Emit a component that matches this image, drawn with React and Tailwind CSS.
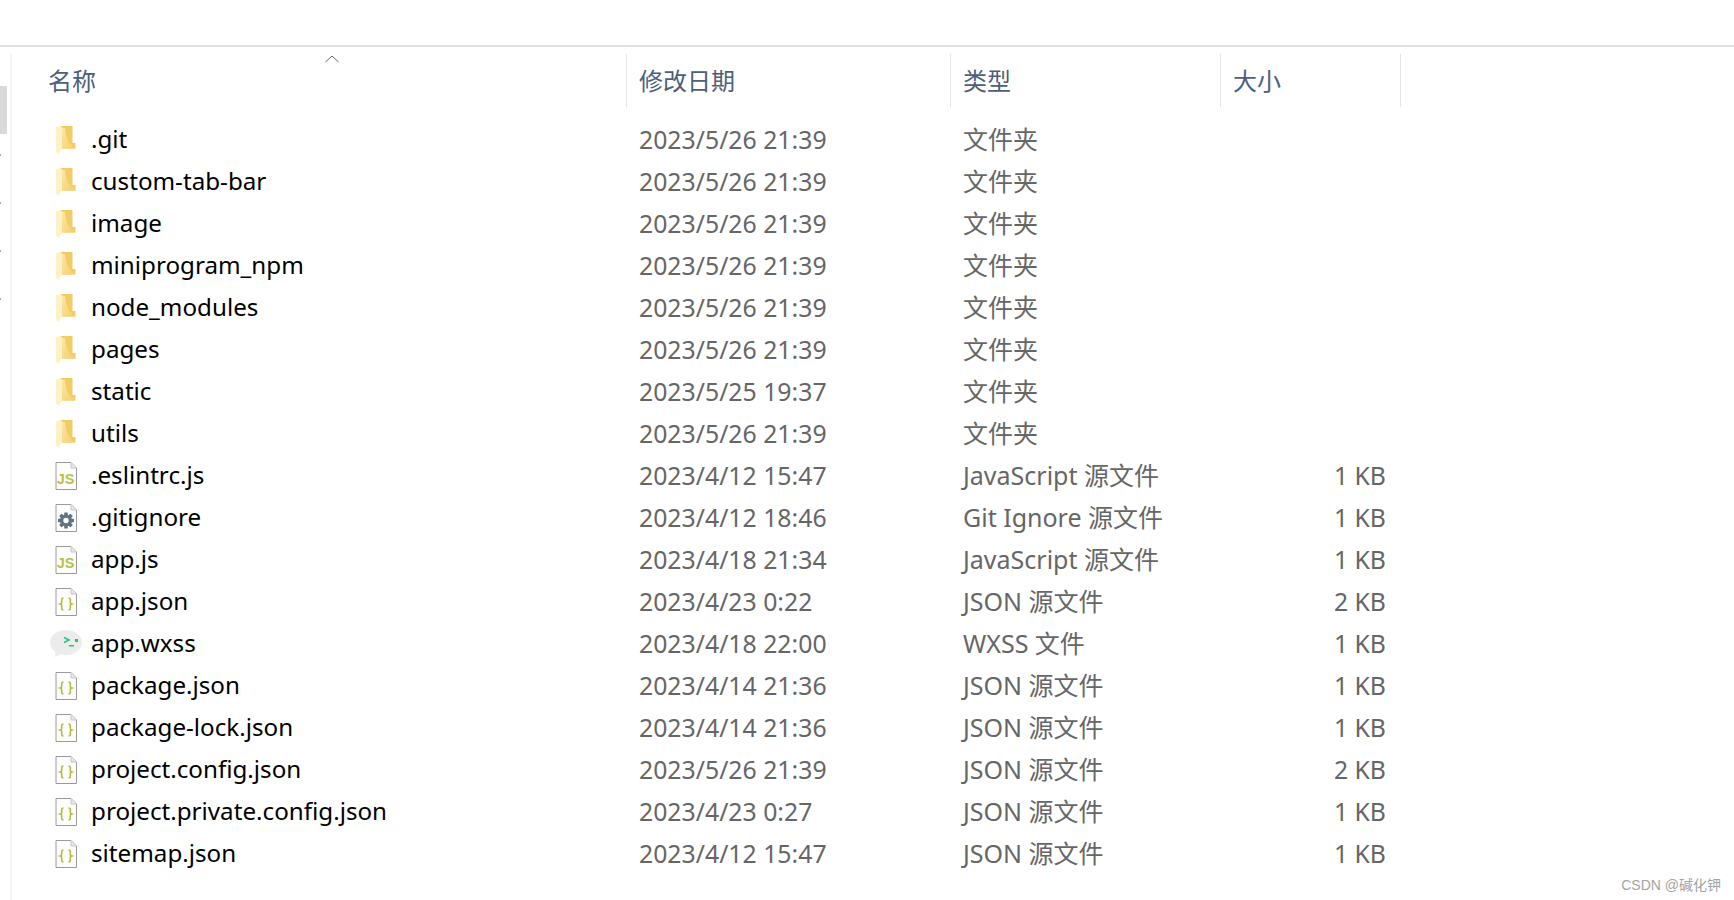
import React from 'react';

const FolderIcon = () => (
  <svg width="20" height="28" viewBox="0 0 20 28">
    <defs>
      <linearGradient id="fold" x1="0" y1="0" x2="1" y2="1">
        <stop offset="0" stopColor="#fbe7a6" />
        <stop offset="1" stopColor="#f5cd68" />
      </linearGradient>
    </defs>
    <path d="M4 0h12.500v17h3v5.500H4z" fill="#f4cc66" />
    <path d="M0 1l5-1 1 2v21l-2 2-1 3-3-2z" fill="#fdf1c6" />
    <path d="M6 2h3c.5 6 1.500 11 4 15l6.500 5.500H6z" fill="url(#fold)" />
  </svg>
);

const FileBase = ({ children }) => (
  <svg width="22" height="28" viewBox="0 0 22 28">
    <path d="M1 .5h15l5.500 5.500v21.500H1z" fill="#fdfdfd" stroke="#9a9a9a" />
    <path d="M16 .5v5.500h5.500" fill="#e8e8e8" stroke="#c6c6c6" />
    {children}
  </svg>
);

const JsIcon = () => (
  <FileBase>
    <text x="10.500" y="21.500" textAnchor="middle" fontSize="14.500" fontWeight="700" fill="#bcc04a" fontFamily="'Liberation Sans', sans-serif">JS</text>
  </FileBase>
);

const JsonIcon = () => (
  <FileBase>
    <path d="M8.500 10c-1.500 0-1.800.6-1.800 2v2.500c0 .8-.4 1.200-1.500 1.500 1.100.3 1.500.7 1.500 1.500V20c0 1.400.3 2 1.800 2" fill="none" stroke="#b6bb3e" strokeWidth="1.600" />
    <path d="M13.500 10c1.500 0 1.800.6 1.800 2v2.500c0 .8.4 1.200 1.500 1.500-1.100.3-1.500.7-1.500 1.500V20c0 1.400-.3 2-1.800 2" fill="none" stroke="#b6bb3e" strokeWidth="1.600" />
  </FileBase>
);

const GearIcon = () => (
  <FileBase>
    <g transform="translate(11 16.500)" fill="#5f7380">
      {[0, 45, 90, 135].map((a) => (
        <rect key={a} x="-1.800" y="-8" width="3.600" height="16" rx="0.600" transform={`rotate(${a})`} />
      ))}
      <circle r="6" />
      <circle r="2.700" fill="#fdfdfd" />
    </g>
  </FileBase>
);

const WxssIcon = () => (
  <svg width="32" height="28" viewBox="0 0 32 28">
    <path d="M16 0c8.500 0 16 5 16 12.500S24.500 25 16 25c-2 0-3.500-.2-5-.7L5 27l.5-5C2 20 0 16.500 0 12.500 0 5 7.500 0 16 0z" fill="#ececec" />
    <path d="M14 7.500l5 2.500-5 2.500" fill="none" stroke="#1fc777" strokeWidth="1.500" />
    <rect x="25" y="9" width="3" height="3" fill="#1fc777" />
    <rect x="19" y="15" width="5" height="1.500" fill="#1fc777" />
  </svg>
);

const icons = { folder: FolderIcon, js: JsIcon, json: JsonIcon, git: GearIcon, wxss: WxssIcon };

const files = [
  ['folder', '.git', '2023/5/26 21:39', '文件夹', ''],
  ['folder', 'custom-tab-bar', '2023/5/26 21:39', '文件夹', ''],
  ['folder', 'image', '2023/5/26 21:39', '文件夹', ''],
  ['folder', 'miniprogram_npm', '2023/5/26 21:39', '文件夹', ''],
  ['folder', 'node_modules', '2023/5/26 21:39', '文件夹', ''],
  ['folder', 'pages', '2023/5/26 21:39', '文件夹', ''],
  ['folder', 'static', '2023/5/25 19:37', '文件夹', ''],
  ['folder', 'utils', '2023/5/26 21:39', '文件夹', ''],
  ['js', '.eslintrc.js', '2023/4/12 15:47', 'JavaScript 源文件', '1 KB'],
  ['git', '.gitignore', '2023/4/12 18:46', 'Git Ignore 源文件', '1 KB'],
  ['js', 'app.js', '2023/4/18 21:34', 'JavaScript 源文件', '1 KB'],
  ['json', 'app.json', '2023/4/23 0:22', 'JSON 源文件', '2 KB'],
  ['wxss', 'app.wxss', '2023/4/18 22:00', 'WXSS 文件', '1 KB'],
  ['json', 'package.json', '2023/4/14 21:36', 'JSON 源文件', '1 KB'],
  ['json', 'package-lock.json', '2023/4/14 21:36', 'JSON 源文件', '1 KB'],
  ['json', 'project.config.json', '2023/5/26 21:39', 'JSON 源文件', '2 KB'],
  ['json', 'project.private.config.json', '2023/4/23 0:27', 'JSON 源文件', '1 KB'],
  ['json', 'sitemap.json', '2023/4/12 15:47', 'JSON 源文件', '1 KB'],
];

const App = () => {
  return (
    <div className="relative h-[900px] w-[1734px] overflow-hidden bg-white font-['Noto_Sans','Noto_Sans_CJK_SC',sans-serif]">
      <div className="h-[47px] border-b-2 border-[#e0e0e0]" />
      <div className="flex h-[853px]">
        <div className="flex w-[10px] flex-col">
          <div className="mt-[39px] h-[48px] w-[7px] bg-[#d9d9d9]" />
          <div className="mt-[20px] h-[2px] w-[1px] bg-[#aaaaaa]" />
          <div className="mt-[46px] h-[2px] w-[1px] bg-[#aaaaaa]" />
          <div className="mt-[46px] h-[2px] w-[1px] bg-[#aaaaaa]" />
          <div className="mt-[46px] h-[2px] w-[1px] bg-[#aaaaaa]" />
        </div>
        <div className="mt-[7px] flex-1 border-l-2 border-[#f5f5f5]">
          <div className="relative flex h-[53px] text-[24px] text-[#4c607a]">
            <div className="w-[614px] pl-[36px] pt-[8px] leading-[38px]">名称</div>
            <div className="w-[324px] border-l border-[#e5e5e5] pl-[12px] pt-[8px] leading-[38px]">修改日期</div>
            <div className="w-[270px] border-l border-[#e5e5e5] pl-[12px] pt-[8px] leading-[38px]">类型</div>
            <div className="w-[181px] border-r border-l border-[#e5e5e5] pl-[12px] pt-[8px] leading-[38px]">大小</div>
            <svg className="absolute left-[313px] top-[1px]" width="14" height="8" viewBox="0 0 14 8">
              <path d="M.5 7L7 1l6.500 6" fill="none" stroke="#6b6b6b" />
            </svg>
          </div>
          <div className="mt-[12px] flex flex-col">
            {files.map(([kind, name, date, type, size]) => {
              const Icon = icons[kind];
              return (
                <div key={name} className="flex h-[42px] items-center text-[24.800px]">
                  <div className="flex w-[614px] items-center">
                    <div className="flex w-[79px] justify-end pr-[8px]">
                      <div className="flex w-[34px] justify-center">
                        <Icon />
                      </div>
                    </div>
                    <span className="mb-[1px] text-[24.200px] text-black">{name}</span>
                  </div>
                  <div className="w-[324px] pl-[13px] text-[#666666]">{date}</div>
                  <div className="w-[271px] pl-[13px] text-[25px] text-[#666666]">{type}</div>
                  <div className="w-[165px] text-right text-[#666666]">{size}</div>
                </div>
              );
            })}
          </div>
        </div>
      </div>
      <div className="absolute bottom-[4px] right-[13px] font-['Liberation_Sans','Noto_Sans_CJK_SC',sans-serif] text-[14px] text-[#a3a3a3]">CSDN @碱化钾</div>
    </div>
  );
};

export default App;
